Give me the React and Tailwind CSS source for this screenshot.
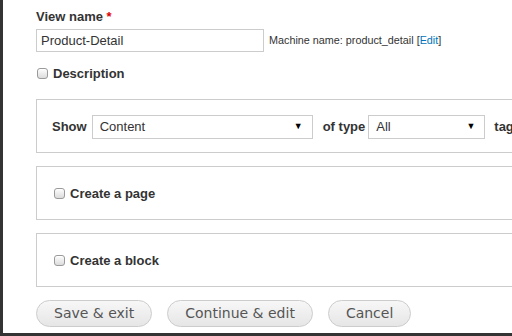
import React from 'react'

const sans = { fontFamily: '"Liberation Sans", Arial, sans-serif' }

function Check() {
  return (
    <span className="inline-block h-[11px] w-[11px] rounded-[3px] border border-[#9a9a9a] bg-gradient-to-b from-[#fdfdfd] to-[#dcdcdc] shadow-[inset_0_1px_0_#fff]" />
  )
}

function FakeSelect({ value, width }) {
  return (
    <div className={`flex h-[24px] ${width} items-center justify-between border border-[#cccccc] bg-white pl-[7px] pr-[9px] text-[13px] text-[#333]`}>
      <span>{value}</span>
      <span className="text-[9px] text-black">▼</span>
    </div>
  )
}

function Fieldset({ children, className = '' }) {
  return (
    <div className={`-mr-[60px] flex h-[54px] items-center border border-[#cccccc] bg-white pl-[15px] ${className}`}>
      {children}
    </div>
  )
}

function Button({ children }) {
  return (
    <button
      type="button"
      className="h-[27px] rounded-full border border-[#cccccc] bg-gradient-to-b from-[#f7f7f7] to-[#e6e6e6] px-[17px] text-[14px] text-[#555]"
      style={{ fontFamily: '"DejaVu Sans", Verdana, sans-serif' }}
    >
      {children}
    </button>
  )
}

export default function App() {
  return (
    <div className="h-[336px] w-[512px] overflow-hidden bg-[#343434]" style={sans}>
      <div className="ml-[3px] h-[333px] overflow-hidden bg-white pl-[33px] pt-[9px] text-[#333]">
        <div className="text-[13px] font-bold leading-[16px]">
          View name <span className="text-[#e00000]">*</span>
        </div>
        <div className="mt-[4px] flex items-center gap-[5px]">
          <div className="flex h-[23px] w-[228px] items-center border border-[#cccccc] px-[4px] text-[13px]">
            Product-Detail
          </div>
          <span className="text-[10.8px]">
            Machine name: product_detail [<span className="text-[#0074bd]">Edit</span>]
          </span>
        </div>
        <div className="mt-[12px] flex items-center gap-[5px] pl-[1px] text-[13px] font-bold">
          <Check />
          <span>Description</span>
        </div>

        <div className="mt-[15px] flex flex-col gap-[13px]">
          <Fieldset className="pt-[3px]">
            <span className="mr-[5px] text-[13px] font-bold">Show</span>
            <FakeSelect value="Content" width="w-[221px]" />
            <span className="ml-[10px] mr-[3px] text-[13px] font-bold">of type</span>
            <FakeSelect value="All" width="w-[117px]" />
            <span className="ml-[9px] text-[13px] font-bold">tags</span>
          </Fieldset>
          <Fieldset className="pl-[17px] pt-[2px]">
            <span className="flex items-center gap-[5px] text-[13px] font-bold">
              <Check />
              Create a page
            </span>
          </Fieldset>
          <Fieldset className="pl-[17px] pt-[2px]">
            <span className="flex items-center gap-[5px] text-[13px] font-bold">
              <Check />
              Create a block
            </span>
          </Fieldset>
        </div>

        <div className="mt-[13px] flex gap-[15px]">
          <Button>Save &amp; exit</Button>
          <Button>Continue &amp; edit</Button>
          <Button>Cancel</Button>
        </div>
      </div>
    </div>
  )
}
